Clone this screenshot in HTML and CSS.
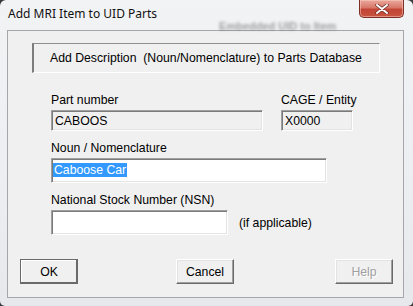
FILE: index.html
```html
<!DOCTYPE html>
<html lang="en">
<head>
  <meta charset="UTF-8">
  <title>Add MRI Item to UID Parts</title>
  <link rel="stylesheet" href="styles.css">
</head>
<body>

  <!-- Dialog window -->
  <div class="window">
    <div class="titlebar">
      <span class="title">Add MRI Item to UID Parts</span>
      <span class="ghost">Embedded UID to Item</span>
      <button class="close-btn" aria-label="Close">
        <svg width="14" height="10" viewBox="0 0 14 10">
          <path d="M2 1 L12 9 M12 1 L2 9" stroke="#6b2a22" stroke-width="3.4" stroke-linecap="round"/>
          <path d="M2 1 L12 9 M12 1 L2 9" stroke="#ffffff" stroke-width="2" stroke-linecap="round"/>
        </svg>
      </button>
    </div>

    <div class="client">
      <div class="banner">Add Description&nbsp; (Noun/Nomenclature) to Parts Database</div>

      <div class="form">
        <div class="row">
          <div class="field">
            <label>Part number</label>
            <div class="box readonly part-box">CABOOS</div>
          </div>
          <div class="field cage-field">
            <label>CAGE / Entity</label>
            <div class="box readonly cage-box">X0000</div>
          </div>
        </div>

        <div class="field noun-field">
          <label>Noun / Nomenclature</label>
          <div class="box noun-box"><span class="selected">Caboose Car</span></div>
        </div>

        <div class="field nsn-field">
          <label>National Stock Number (NSN)</label>
          <div class="nsn-row">
            <div class="box nsn-box"></div>
            <span class="hint">(if applicable)</span>
          </div>
        </div>
      </div>

      <div class="buttons">
        <button class="btn btn-default">OK</button>
        <button class="btn btn-cancel">Cancel</button>
        <button class="btn btn-help" disabled>Help</button>
      </div>
    </div>
  </div>

</body>
</html>
```

FILE: styles.css
```css
/* Base styles */
* {
  margin: 0;
  padding: 0;
  box-sizing: border-box;
}

body {
  background-color: #3a3a3a;
  font-family: 'Liberation Sans', Arial, sans-serif;
  font-size: 12.25px;
  color: #000;
}

/* Aero style window frame */
.window {
  width: 413px;
  height: 306px;
  padding: 0 9px 0 7px;
  background: linear-gradient(to bottom, #f2f3f5 0%, #eceef1 60%, #e6e8eb 100%);
  border-radius: 6px 6px 5px 5px;
  overflow: hidden;
}

.titlebar {
  height: 30px;
  display: flex;
  align-items: flex-start;
  padding-left: 1px;
}

.title {
  margin-top: 6px;
  font-family: 'Noto Sans', 'Open Sans', sans-serif;
  font-size: 12px;
  line-height: 16px;
  color: #111;
}

/* blurred window behind the glass */
.ghost {
  margin: 20px 0 0 62px;
  font-size: 11px;
  font-weight: bold;
  color: #5a5a5a;
  filter: blur(1.4px);
  opacity: 0.55;
}

.close-btn {
  margin-left: auto;
  width: 45px;
  height: 18px;
  border: 1px solid #7e2f25;
  border-top: none;
  border-radius: 0 0 5px 5px;
  background: linear-gradient(to bottom, #e9a99b 0%, #d8776a 45%, #c24535 55%, #c8553f 100%);
  box-shadow: inset 0 0 0 1px rgba(255, 210, 200, 0.5);
  display: flex;
  align-items: center;
  justify-content: center;
}

/* Client area of the dialog */
.client {
  height: 268px;
  border: 1px solid #a3a6aa;
  background-color: #f0f0f0;
  display: flex;
  flex-direction: column;
}

.banner {
  margin: 12px 0 0 24px;
  width: 348px;
  height: 30px;
  padding-left: 16px;
  line-height: 28px;
  border-top: 1px solid #8e8e8e;
  border-left: 2px solid #7c7c7c;
  border-right: 1px solid #ffffff;
  border-bottom: 1px solid #ffffff;
}

.form {
  margin-top: 20px;
  padding-left: 43px;
}

.row {
  display: flex;
}

.field label {
  display: block;
  line-height: 14px;
  margin-bottom: 3px;
}

.cage-field {
  margin-left: 18px;
}

.noun-field {
  margin-top: 10px;
}

.nsn-field {
  margin-top: 10px;
}

/* Sunken edit boxes */
.box {
  display: flex;
  align-items: center;
  padding-left: 3px;
  background-color: #ffffff;
  border: 1px solid;
  border-color: #a0a0a0 #ffffff #ffffff #a0a0a0;
  box-shadow: inset 1px 1px 0 #7a7a7a, inset -1px -1px 0 #e3e3e3;
}

.readonly {
  background-color: #f0f0f0;
  height: 21px;
}

.part-box {
  width: 212px;
}

.cage-box {
  width: 72px;
}

.noun-box {
  width: 276px;
  height: 25px;
  padding-left: 1px;
}

.selected {
  background-color: #3399ff;
  color: #ffffff;
  line-height: 14px;
  padding: 0 1px;
  margin-top: -2px;
}

.nsn-row {
  display: flex;
  align-items: center;
}

.nsn-box {
  width: 177px;
  height: 25px;
}

.hint {
  margin-left: 11px;
}

/* Push buttons */
.buttons {
  display: flex;
  margin-top: 24px;
  padding-left: 12px;
}

.btn {
  width: 58px;
  height: 25px;
  font-family: 'Liberation Sans', Arial, sans-serif;
  font-size: 12.25px;
  color: #000;
  background-color: #f0f0f0;
  border: 1px solid;
  border-color: #ffffff #6a6a6a #6a6a6a #ffffff;
  box-shadow: inset -1px -1px 0 #a0a0a0, inset 1px 1px 0 #e3e3e3;
}

.btn-default {
  border-color: #6a6a6a;
  box-shadow: inset -1px -1px 0 #6a6a6a, inset 1px 1px 0 #ffffff;
}

.btn-cancel {
  margin-left: 98px;
}

.btn-help {
  margin-left: 101px;
  color: #a0a0a0;
  text-shadow: 1px 1px 0 #ffffff;
}
```
